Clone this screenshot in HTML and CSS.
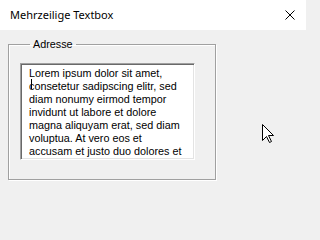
FILE: index.html
```html
<!DOCTYPE html>
<html lang="de">
<head>
<meta charset="utf-8">
<title>Mehrzeilige Textbox</title>
<link rel="stylesheet" href="styles.css">
</head>
<body>
<div class="window">
  <div class="titlebar">
    <span class="title">Mehrzeilige Textbox</span>
    <span class="close" aria-label="Schließen">
      <svg width="10" height="10" viewBox="0 0 10 10"><path d="M0.5 0.5 L9.5 9.5 M9.5 0.5 L0.5 9.5" stroke="#000" stroke-width="1" fill="none"/></svg>
    </span>
  </div>
  <div class="client">
    <fieldset class="group">
      <legend class="legend">Adresse</legend>
      <div class="textbox">
        <span class="caret"></span>
        <div class="text">Lorem ipsum dolor sit amet,<br>consetetur sadipscing elitr, sed<br>diam nonumy eirmod tempor<br>invidunt ut labore et dolore<br>magna aliquyam erat, sed diam<br>voluptua. At vero eos et<br>accusam et justo duo dolores et</div>
      </div>
    </fieldset>
  </div>
  <svg class="pointer" width="13" height="20" viewBox="0 0 13 20"><path d="M0.5 0.5 L0.5 16.5 L4.5 12.5 L7.5 18.5 L9.5 17.5 L6.5 11.5 L11.5 11.5 Z" fill="#fff" stroke="#000" stroke-width="1" stroke-linejoin="miter"/></svg>
</div>
</body>
</html>
```
FILE: styles.css
```css
html, body {
  margin: 0;
  padding: 0;
}
body {
  width: 306px;
  height: 233px;
  overflow: hidden;
  background: #f0f0f0;
  font-family: "Liberation Sans", Arial, sans-serif;
}
.window {
  position: relative;
  width: 306px;
  height: 233px;
}
.titlebar {
  height: 30px;
  background: #fff;
  display: flex;
  align-items: center;
  justify-content: space-between;
  padding: 0 11px 0 10px;
  box-sizing: border-box;
}
.title {
  font-family: "Noto Sans", "Liberation Sans", sans-serif;
  font-size: 11px;
  color: #000;
  line-height: 14px;
}
.close {
  display: flex;
  width: 10px;
  height: 10px;
}
.client {
  padding: 8px 0 0 8px;
}
.group {
  margin: 0;
  width: 208px;
  height: 142px;
  box-sizing: border-box;
  border: 1px solid #a0a0a0;
  box-shadow: inset 1px 1px 0 #fff, 1px 1px 0 #fff;
  padding: 12px 0 0 11px;
  min-width: 0;
}
.legend {
  margin-left: 10px;
  padding: 0 3px;
  font-size: 10.8px;
  line-height: 13px;
  color: #000;
}
.textbox {
  position: relative;
  width: 175px;
  height: 97px;
  box-sizing: border-box;
  background: #fff;
  border: 1px solid;
  border-color: #a0a0a0 #fff #fff #a0a0a0;
  box-shadow: inset 1px 1px 0 #696969, inset -1px -1px 0 #e3e3e3;
  padding: 3px 0 0 8px;
  overflow: hidden;
}
.text {
  font-size: 10.8px;
  line-height: 13px;
  color: #000;
  white-space: nowrap;
}
.caret {
  position: absolute;
  left: 10px;
  top: 15px;
  width: 1px;
  height: 10px;
  background: #000;
}
.pointer {
  position: absolute;
  left: 262px;
  top: 124px;
}
```
